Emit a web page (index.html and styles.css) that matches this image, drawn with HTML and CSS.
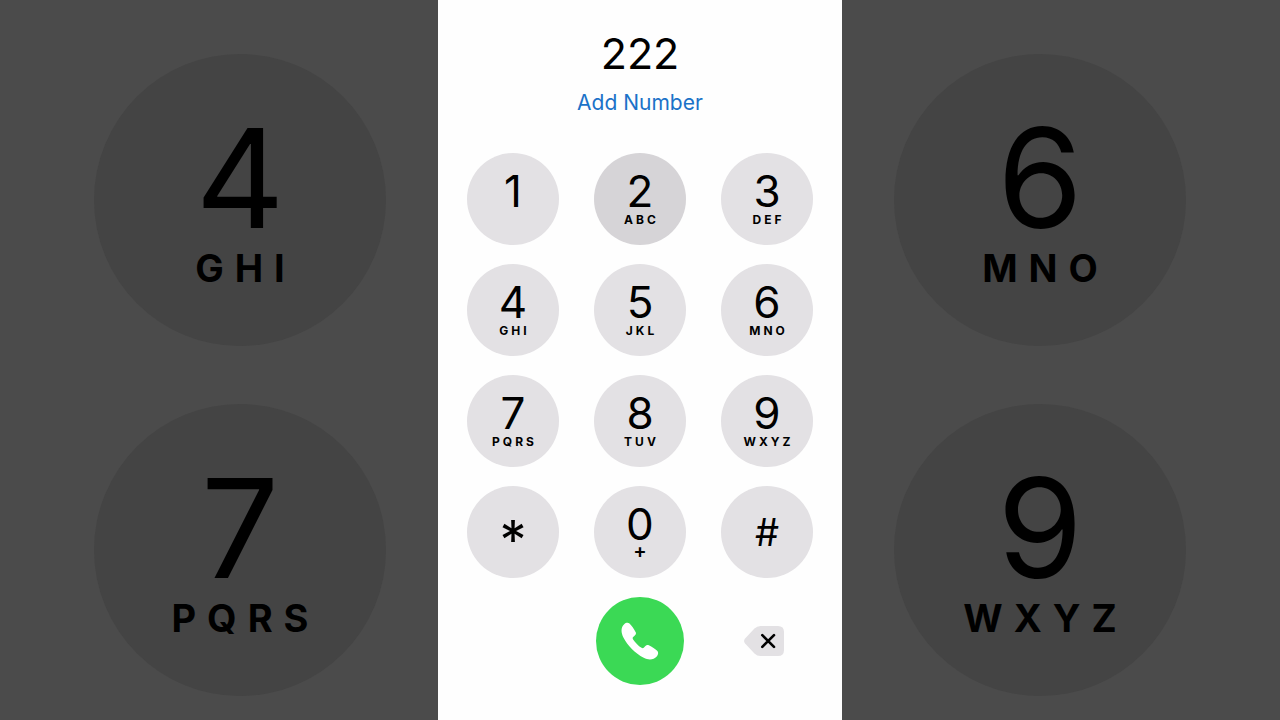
FILE: index.html
```html
<!DOCTYPE html>
<html lang="en">
<head>
  <meta charset="UTF-8" />
  <meta name="viewport" content="width=device-width, initial-scale=1.0"/>
  <title>Phone Keypad</title>
  <link rel="stylesheet" href="styles.css">
</head>
<body>

  <div class="container">

    <!-- dimmed enlarged keys, left -->
    <div class="side side-left">
      <button class="key"><span class="digit">4</span><span class="letters">GHI</span></button>
      <button class="key"><span class="digit">7</span><span class="letters">PQRS</span></button>
    </div>

    <main class="phone">
      <output class="number">222</output>
      <button class="add-btn">Add Number</button>

      <div class="keypad">
        <button class="key"><span class="digit">1</span></button>
        <button class="key active"><span class="digit">2</span><span class="letters">ABC</span></button>
        <button class="key"><span class="digit">3</span><span class="letters">DEF</span></button>

        <button class="key"><span class="digit">4</span><span class="letters">GHI</span></button>
        <button class="key"><span class="digit">5</span><span class="letters">JKL</span></button>
        <button class="key"><span class="digit">6</span><span class="letters">MNO</span></button>

        <button class="key"><span class="digit">7</span><span class="letters">PQRS</span></button>
        <button class="key"><span class="digit">8</span><span class="letters">TUV</span></button>
        <button class="key"><span class="digit">9</span><span class="letters">WXYZ</span></button>

        <button class="key"><span class="star">*</span></button>
        <button class="key"><span class="digit">0</span><span class="plus">+</span></button>
        <button class="key"><span class="hash">#</span></button>

        <button class="call-btn" aria-label="Call">
          <svg width="38" height="38" viewBox="0 0 38 38">
            <path fill="#fff" d="M3.2 2.2C4.8 .9 6.9 .3 8.5 1.6C10.5 3.4 13 7 14.7 10.2C15.4 11.6 14.8 12.6 13.8 13.5L12.2 14.9C11.4 15.7 11.6 16.6 12.1 17.4C14.2 20.6 17.3 23.7 20.5 25.8C21.4 26.4 22.2 26.4 23 25.6L24.4 24C25.3 23.1 26.5 22.7 27.8 23.3C31 24.9 34.4 27 36.4 29C37.7 30.4 37.1 32.8 35.7 34.4C32.7 37.8 27.7 38.4 22.7 35.7C14 31 6.6 23.4 2.4 15.4C-.3 10.2 -.1 5 3.2 2.2Z"/>
          </svg>
        </button>
        <button class="delete-btn" aria-label="Delete">
          <svg width="40" height="30" viewBox="0 0 40 30">
            <path fill="#e3e1e4" d="M1.1 12.6L10.5 2.6Q13 0 16.5 0H34Q40 0 40 6V24Q40 30 34 30H16.5Q13 30 10.5 27.4L1.1 17.4Q-1 15 1.1 12.6Z"/>
            <path fill="none" stroke="#000" stroke-width="2.6" stroke-linecap="round" d="M18.3 9.2L30 20.9M30 9.2L18.3 20.9"/>
          </svg>
        </button>
      </div>
    </main>

    <!-- dimmed enlarged keys, right -->
    <div class="side side-right">
      <button class="key"><span class="digit">6</span><span class="letters">MNO</span></button>
      <button class="key"><span class="digit">9</span><span class="letters">WXYZ</span></button>
    </div>

  </div>

</body>
</html>
```
FILE: styles.css
```css
* {
  margin: 0;
  padding: 0;
  box-sizing: border-box;
}

body {
  background-color: #4b4b4b;
  font-family: Inter, "Liberation Sans", sans-serif;
  color: black;
}

button {
  border: none;
  background: none;
  font-family: inherit;
  color: inherit;
  cursor: pointer;
}

.container {
  display: grid;
  grid-template-columns: 1fr 404px 1fr;
  min-height: 100vh;
}

.phone {
  background-color: #fefefe;
  display: flex;
  flex-direction: column;
  align-items: center;
  padding: 31px 0;
}

.number {
  font-size: 43px;
  line-height: 44px;
}

.add-btn {
  margin-top: 16px;
  font-size: 21px;
  line-height: 24px;
  color: #1b72c8;
}

.keypad {
  display: grid;
  grid-template-columns: repeat(3, 92px);
  gap: 19px 35px;
  margin-top: 38px;
}

.key {
  width: 92px;
  height: 92px;
  padding-top: 16px;
  border-radius: 50%;
  background-color: #e3e1e4;
  display: flex;
  flex-direction: column;
  align-items: center;
}

.key.active {
  background-color: #d6d4d7;
}

.digit {
  font-size: 44px;
  line-height: 44px;
}

.letters {
  font-size: 12px;
  line-height: 14px;
  font-weight: 700;
  letter-spacing: 3px;
  padding-left: 3px;
}

.plus {
  font-size: 20px;
  line-height: 10px;
  font-weight: 600;
}

.star {
  font-size: 54px;
  line-height: 76px;
}

.hash {
  font-size: 38px;
  line-height: 60px;
}

.call-btn {
  grid-column: 2;
  justify-self: center;
  width: 88px;
  height: 88px;
  border-radius: 50%;
  background-color: #3bd955;
  display: flex;
  justify-content: center;
  align-items: center;
}

.delete-btn {
  display: flex;
  align-items: center;
  justify-content: center;
  padding-right: 6px;
}

/* big dark keys beside the phone */
.side {
  display: flex;
  flex-direction: column;
  gap: 58px;
  padding: 54px 52px 0;
}

.side-left {
  align-items: flex-end;
}

.side-right {
  align-items: flex-start;
}

.side .key {
  width: 292px;
  height: 292px;
  padding-top: 55px;
  background-color: #444444;
}

.side .digit {
  font-size: 138px;
  line-height: 138px;
}

.side .letters {
  font-size: 38px;
  line-height: 43px;
  letter-spacing: 11px;
  padding-left: 11px;
}
```
